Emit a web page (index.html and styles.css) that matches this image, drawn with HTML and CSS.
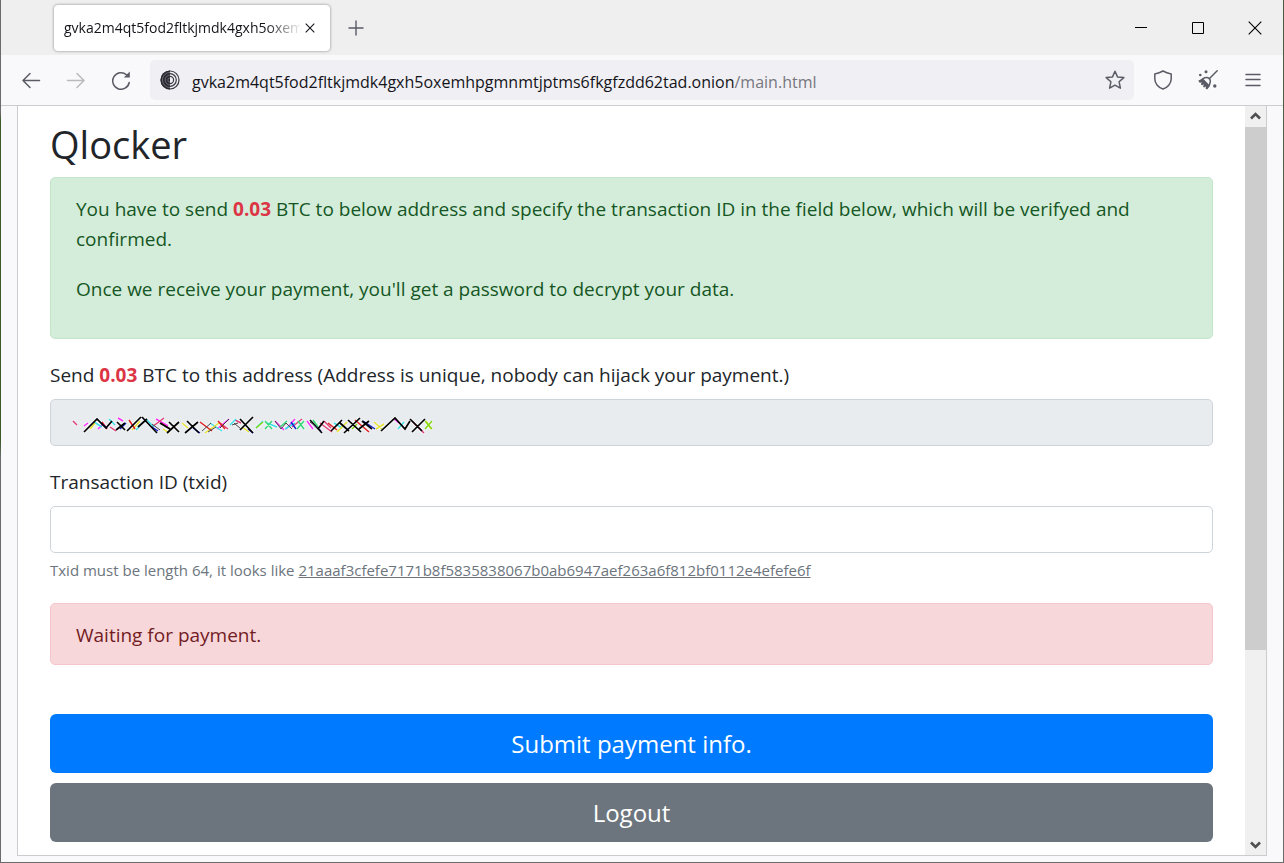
FILE: index.html
```
<!DOCTYPE html>
<html lang="en">
<head>
  <meta charset="UTF-8">
  <meta name="viewport" content="width=device-width, initial-scale=1.0">
  <title>Qlocker</title>
  <link rel="stylesheet" href="styles.css">
</head>
<body>
  <div class="window">

    <!-- Tab strip -->
    <header class="tabbar">
      <div class="tab">
        <span class="tab-title">gvka2m4qt5fod2fltkjmdk4gxh5oxemhpgmnmtjptms6fkgfzdd62tad.onion</span>
        <button class="tab-close" aria-label="Close tab">
          <svg width="10" height="10" viewBox="0 0 10 10"><path d="M.7.7l8.6 8.6M9.3.7L.7 9.3" stroke="#15141a" stroke-width="1.1"/></svg>
        </button>
      </div>
      <button class="new-tab" aria-label="New tab">
        <svg width="16" height="16" viewBox="0 0 16 16"><path d="M8 .5v15M.5 8h15" stroke="#5b5b66" stroke-width="1.4"/></svg>
      </button>
      <div class="window-buttons">
        <button aria-label="Minimize"><svg width="14" height="14" viewBox="0 0 14 14"><path d="M1 6.500h12" stroke="#000"/></svg></button>
        <button aria-label="Maximize"><svg width="14" height="14" viewBox="0 0 14 14"><path d="M1.500 1.500h11v11h-11z" fill="none" stroke="#000"/></svg></button>
        <button aria-label="Close"><svg width="14" height="14" viewBox="0 0 14 14"><path d="M.7.7l12.6 12.6M13.3.7L.7 13.3" stroke="#000" stroke-width="1.1"/></svg></button>
      </div>
    </header>

    <!-- Navigation toolbar -->
    <nav class="toolbar">
      <button aria-label="Back"><svg width="20" height="20" viewBox="0 0 20 20"><path d="M18.500 10.500H2M9 3.500l-7 7 7 7" class="line"/></svg></button>
      <button class="disabled" aria-label="Forward" disabled><svg width="20" height="20" viewBox="0 0 20 20"><path d="M1.500 10.500H18M11 3.500l7 7-7 7" class="line"/></svg></button>
      <button aria-label="Reload"><svg width="20" height="20" viewBox="0 0 20 20"><path d="M18.200 12.500A8.300 8.300 0 1 1 15.500 4.700" class="line"/><path d="M18.800 1.500v6h-6z" fill="#5b5b66"/></svg></button>
      <div class="urlbar">
        <svg width="20" height="20" viewBox="0 0 20 20">
          <g fill="none" stroke="#3a3944" stroke-width="1.200"><circle cx="10" cy="10" r="9"/><circle cx="10" cy="10" r="6.300"/><circle cx="10" cy="10" r="3.600"/></g>
          <path d="M10 .5a9.500 9.500 0 0 0 0 19z" fill="#2b2a33"/>
          <g fill="none" stroke="#85848c" stroke-width=".7"><path d="M10 2.400a7.600 7.600 0 0 0 0 15.200M10 5.100a4.900 4.900 0 0 0 0 9.800M10 7.800a2.200 2.200 0 0 0 0 4.400"/></g>
        </svg>
        <div class="url-text">
          <input class="url-host" type="text" aria-label="Address" size="56" value="gvka2m4qt5fod2fltkjmdk4gxh5oxemhpgmnmtjptms6fkgfzdd62tad.onion">
          <span class="url-path">/main.html</span>
        </div>
        <button class="star" aria-label="Bookmark this page"><svg width="20" height="20" viewBox="0 0 20 20"><path d="M10 1.200l2.500 5.700 6.300.7-4.700 4.200 1.300 6.400L10 15.200l-5.400 3 1.300-6.400-4.700-4.200 6.300-.7z" class="line"/></svg></button>
      </div>
      <button aria-label="Security level"><svg width="20" height="20" viewBox="0 0 20 20"><path d="M10 1c2.500 1.500 5 2.400 8.200 3v5c0 4.500-3.700 8.700-8.200 10-4.500-1.300-8.200-5.500-8.200-10V4C5 3.400 7.500 2.500 10 1z" class="line"/></svg></button>
      <button aria-label="New identity">
        <svg width="20" height="20" viewBox="0 0 20 20">
          <path d="M19.200.8l-7.700 7.700M4.600 8.800c2.200-1.300 5-1.700 6.500-.4 1.400 1.300 1.500 4.600-.7 8.200" class="line"/>
          <path d="M.2 10.800l4.600-2.600 7.200 7.600-2.800 3.800-1.600-.8.400-2.300-2 1-1-1 .9-2.100-2.100.9-.9-1 .8-1.900-2 .4z" fill="#5b5b66"/>
          <g fill="#5b5b66"><circle cx="8" cy="1.800" r="1.500"/><circle cx="2.300" cy="5" r="1.300"/><circle cx="16.800" cy="16" r="1.700"/></g>
        </svg>
      </button>
      <button aria-label="Menu"><svg width="16" height="16" viewBox="0 0 16 16"><path d="M1 2.500h14M1 7.500h14M1 13.500h14" class="line"/></svg></button>
    </nav>

    <!-- Page -->
    <div class="viewport">
      <main class="page">
        <h1>Qlocker</h1>
        <div class="alert alert-success">
          <p>You have to send <b>0.03</b> BTC to below address and specify the transaction ID in the field below, which will be verifyed and confirmed.</p>
          <p>Once we receive your payment, you'll get a password to decrypt your data.</p>
        </div>

        <form>
          <div class="form-group">
            <label for="address">Send <b>0.03</b> BTC to this address (Address is unique, nobody can hijack your payment.)</label>
            <div class="address-box">
              <input class="form-control" type="text" id="address" readonly>
              <svg class="scribble" width="362" height="20" viewBox="0 0 362 20">
                <path stroke="#f3f" d="M12 11l4-3M46 3l5 3M26 14l5-5M84 4l12 7M145 14l12-10M203 6l9 9M214 14l9-10M235 6l6 8M322 4l5 4"/>
                <path stroke="#e0407a" d="M1 6l4 4M80 12l12-9M148 8l8 6M163 5l6 3M248 8l12 9M340 6l12 12M38 12l6 4M252 6l7 7M220 12l10-8"/>
                <path stroke="#3ddfe8" d="M22 7l8 5M37 4l6 6M64 15l4-4M74 4l8 8M138 8l12 8M158 10l6-6M184 13l7-7M195 8l10 4M213 14l10-6M262 8l8 5M326 14l6-7"/>
                <path stroke="#36d978" d="M193 6l7 8M200 6l-7 8M226 6l6 8M232 6l-7 8M208 12l7-6M241 5l5 7"/>
                <path stroke="#e6e234" d="M18 14l5-6M60 15l8-9M91 14l6 4M110 8l6 5M133 18l14-10M170 12l7 5M265 17l10-10M302 7l8 7M304 14l8-5M354 6l5 8"/>
                <path stroke="#86d816" d="M353 14l7-8M353 6l7 8M184 13l7-6M280 14l5-5"/>
                <path stroke="#e02020" d="M30 7l5 7M57 5l6 9M89 8l9 6M128 7l12 9M146 6l7 8M256 8l9 7M283 5l14 12"/>
                <path stroke="#1822c8" d="M29 8l6 5M48 14l6-6M80 12l6 4M121 13l7 5M176 14l5 4M219 7l5 7M242 10l7 6M291 6l12 8"/>
                <path class="ink" d="M12 17L25 4l9 9 6-7M45 7l8 8M44 15l9-7M55 16L69 2M70 2l15 16M66 12l9-8M88 8l10 6M95 18l12-11M97 7l10 10M113 18l13-11M115 6l12 12M168 4l13 14M168 15L181 2M238 5l12 13M246 14l6-8M259 16l11-11M268 8l9 8M272 18l16-15M276 5l13 12M287 14l10-8M290 6l10 8M309 16l14-13 10 11 5-8M338 4l12 12M340 17l13-13"/>
                <path class="ink thin" d="M130 16l9-8M136 17l8-5M148 13l9-9M162 8l7 6M160 10l6-2M203 6l6 8 5-6 6 6M238 7l8 6M80 9l8 6"/>
              </svg>
            </div>
          </div>

          <div class="form-group">
            <label for="txid">Transaction ID (txid)</label>
            <input class="form-control" type="text" id="txid">
            <small>Txid must be length 64, it looks like <u>21aaaf3cfefe7171b8f5835838067b0ab6947aef263a6f812bf0112e4efefe6f</u></small>
          </div>

          <div class="alert alert-danger">Waiting for payment.</div>

          <button class="btn btn-primary" type="submit">Submit payment info.</button>
          <button class="btn btn-secondary" type="button">Logout</button>
        </form>
      </main>

      <div class="scrollbar">
        <svg width="21" height="21" viewBox="0 0 21 21"><path d="M6 12.500L10.500 8l4.500 4.500" fill="none" stroke="#505050" stroke-width="2.600"/></svg>
        <div class="track"><div class="thumb"></div></div>
        <svg width="21" height="21" viewBox="0 0 21 21"><path d="M6 8.500l4.500 4.500L15 8.500" fill="none" stroke="#505050" stroke-width="2.600"/></svg>
      </div>
    </div>
  </div>
</body>
</html>
```
FILE: styles.css
```
* {
  box-sizing: border-box;
}

body {
  margin: 0;
  font-family: "Open Sans", "Noto Sans", sans-serif;
  color: #212529;
}

button {
  display: flex;
  align-items: center;
  justify-content: center;
  padding: 0;
  border: none;
  background: none;
  font-family: inherit;
}

.window {
  display: flex;
  flex-direction: column;
  height: 100vh;
  border: 1px solid transparent;
  border-top: none;
  background:
    linear-gradient(#f9f9fb, #f9f9fb) padding-box,
    linear-gradient(#6b6b6b 13%, #3d5a2a 14%, #3d5a2a 51%, #6b6b6b 53%) left / 50% 100% no-repeat border-box,
    linear-gradient(#4a5a40, #5a6152 50%, #6b6b6b) right / 50% 100% no-repeat border-box;
}

/* Tab strip */
.tabbar {
  display: flex;
  align-items: center;
  height: 55px;
  padding-left: 53px;
  background: #efefef;
}

.tab {
  display: flex;
  align-items: center;
  width: 276px;
  height: 46px;
  padding: 0 12px 0 10px;
  border-radius: 4px;
  background: #fff;
  box-shadow: 0 0 3px rgba(0, 0, 0, 0.45);
}

.tab-title {
  flex: 1;
  overflow: hidden;
  white-space: nowrap;
  font-size: 14px;
  color: #15141a;
  -webkit-mask-image: linear-gradient(to left, transparent, #000 36px);
  mask-image: linear-gradient(to left, transparent, #000 36px);
}

.tab-close {
  width: 16px;
  height: 20px;
}

.new-tab {
  width: 52px;
  height: 40px;
}

.window-buttons {
  display: flex;
  margin-left: auto;
}

.window-buttons button {
  width: 57px;
  height: 40px;
}

/* Toolbar */
.toolbar {
  display: flex;
  align-items: center;
  height: 51px;
  padding: 0 8px 0 7px;
  border-bottom: 1px solid #cccccf;
}

.toolbar > button {
  width: 45px;
  height: 40px;
}

.line {
  fill: none;
  stroke: #5b5b66;
  stroke-width: 1.5;
  stroke-linecap: round;
  stroke-linejoin: round;
}

.disabled {
  opacity: 0.4;
}

.urlbar {
  display: flex;
  flex: 1;
  align-items: center;
  height: 40px;
  margin: 0 6px 0 7px;
  padding: 0 9px 0 10px;
  border-radius: 5px;
  background: #f0f0f4;
  font-size: 16px;
}

.url-text {
  display: flex;
  align-items: center;
  margin-left: 12px;
  padding-top: 3px;
}

.url-host {
  field-sizing: content;
  padding: 0;
  border: none;
  background: none;
  font: inherit;
  color: #15141a;
}

.url-path {
  color: #77767e;
}

.star {
  margin-left: auto;
}

/* Page area */
.viewport {
  display: flex;
  flex: 1;
  min-height: 0;
  margin: 0 16px 6px;
  border: 1px solid #cccccf;
  border-top: none;
  background: #fff;
}

.page {
  flex: 1;
  overflow: hidden;
  padding: 14px 32px 0;
  font-size: 19px;
  line-height: 30px;
}

h1 {
  margin: 0 0 9px;
  font-size: 38px;
  font-weight: 400;
  line-height: 48px;
}

b {
  color: #dc3545;
}

.alert {
  padding: 16px 25px 14px;
  border: 1px solid;
  border-radius: 5px;
}

.alert p {
  margin: 0 0 20px;
}

.alert-success {
  margin-bottom: 21px;
  border-color: #c3e6cb;
  background: #d4edda;
  color: #155724;
}

.alert-danger {
  margin-bottom: 49px;
  border-color: #f5c6cb;
  background: #f8d7da;
  color: #721c24;
}

.form-group {
  margin-bottom: 21px;
}

label {
  display: block;
  margin-bottom: 9px;
}

.form-control {
  display: block;
  width: 100%;
  height: 47px;
  padding: 8px 16px;
  border: 1px solid #ced4da;
  border-radius: 5px;
  background: #fff;
  font: inherit;
}

.form-control:read-only {
  background: #e9ecef;
}

.address-box {
  position: relative;
}

.scribble {
  position: absolute;
  top: 16px;
  left: 22px;
  fill: none;
  stroke-width: 1.5;
  filter: drop-shadow(0 0 1px #fff);
}

.ink {
  stroke: #000;
  stroke-width: 1.7;
}

.thin {
  stroke: #444;
  stroke-width: 1;
}

small {
  display: block;
  margin-top: 5px;
  font-size: 15px;
  line-height: 24px;
  color: #6c757d;
}

.btn {
  width: 100%;
  height: 59px;
  margin-bottom: 10px;
  border-radius: 6px;
  font-size: 24px;
  color: #fff;
}

.btn-primary {
  background: #007bff;
}

.btn-secondary {
  background: #6c757d;
}

/* Scrollbar */
.scrollbar {
  display: flex;
  flex-direction: column;
  width: 21px;
  background: #f0f0f0;
}

.scrollbar svg {
  display: block;
}

.track {
  flex: 1;
}

.thumb {
  height: 74%;
  background: #cdcdcd;
}
```
